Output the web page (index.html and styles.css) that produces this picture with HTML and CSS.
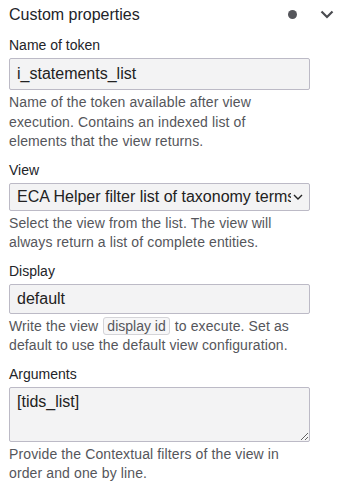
FILE: index.html
```html
<!DOCTYPE html>
<html lang="en">
<head>
<meta charset="utf-8">
<title>Custom properties</title>
<link rel="stylesheet" href="styles.css">
</head>
<body>
<div class="panel">
  <div class="header">
    <span class="title">Custom properties</span>
    <span class="icons">
      <span class="dot"></span>
      <svg class="chev" width="14" height="9" viewBox="0 0 14 9"><path d="M1.5 1.5 L7 7 L12.5 1.5" fill="none" stroke="#4a4b50" stroke-width="2.2"/></svg>
    </span>
  </div>

  <div class="field">
    <div class="label">Name of token</div>
    <input class="control text h32" type="text" value="i_statements_list">
    <div class="help">Name of the token available after view execution. Contains an indexed list of elements that the view returns.</div>
  </div>

  <div class="field">
    <div class="label">View</div>
    <div class="control select">
      <span class="sel-text">ECA Helper filter list of taxonomy terms</span>
      <svg class="sel-chev" width="10" height="6" viewBox="0 0 10 6"><path d="M1 1 L5 5 L9 1" fill="none" stroke="#222" stroke-width="1.4"/></svg>
    </div>
    <div class="help">Select the view from the list. The view will always return a list of complete entities.</div>
  </div>

  <div class="field">
    <div class="label">Display</div>
    <input class="control text h30" type="text" value="default">
    <div class="help">Write the view <code>display id</code> to execute. Set as default to use the default view configuration.</div>
  </div>

  <div class="field">
    <div class="label">Arguments</div>
    <textarea class="control area">[tids_list]</textarea>
    <div class="help">Provide the Contextual filters of the view in order and one by line.</div>
  </div>
</div>
</body>
</html>
```

FILE: styles.css
```css
html, body {
  margin: 0;
  padding: 0;
  background: #ffffff;
}
body {
  font-family: "Liberation Sans", Arial, sans-serif;
  color: #232429;
}
.panel {
  padding: 2px 0 0 9px;
}
.header {
  height: 25px;
  display: flex;
  align-items: center;
  justify-content: space-between;
}
.title {
  font-size: 16px;
  color: #232429;
}
.icons {
  display: flex;
  align-items: center;
  margin-right: 6px;
}
.dot {
  width: 9px;
  height: 9px;
  border-radius: 50%;
  background: #55565b;
  margin-right: 23px;
}
.chev {
  display: block;
}
.field {
  margin-top: 8px;
  width: 301px;
}
.label {
  font-size: 14px;
  line-height: 20px;
  margin-bottom: 3px;
  color: #232429;
}
.control {
  box-sizing: border-box;
  width: 301px;
  display: block;
  margin: 0;
  background: #f3f3f4;
  border: 1px solid #bcbac6;
  border-radius: 2px;
  font-family: "Liberation Sans", Arial, sans-serif;
  font-size: 16px;
  color: #222;
  outline: none;
}
.text {
  padding: 0 7px;
}
.h32 { height: 32px; }
.h30 { height: 30px; }
.select {
  height: 28px;
  display: flex;
  align-items: center;
  padding: 0 6px 0 7px;
  overflow: hidden;
}
.sel-text {
  flex: 1;
  white-space: nowrap;
  overflow: hidden;
  line-height: 20px;
}
.sel-chev {
  flex: none;
  margin-left: 2px;
}
.area {
  height: 55px;
  padding: 4px 7px;
  resize: vertical;
  line-height: 20px;
}
.help {
  margin-top: 3px;
  width: 298px;
  font-size: 14px;
  line-height: 19.5px;
  letter-spacing: 0.12px;
  color: #55565b;
}
code {
  font-family: "Liberation Sans", Arial, sans-serif;
  font-size: 14px;
  border: 1px solid #d4d4d8;
  background: #f7f7f8;
  border-radius: 3px;
  padding: 0 3px;
  margin: 0 1px;
  letter-spacing: 0;
}
```
